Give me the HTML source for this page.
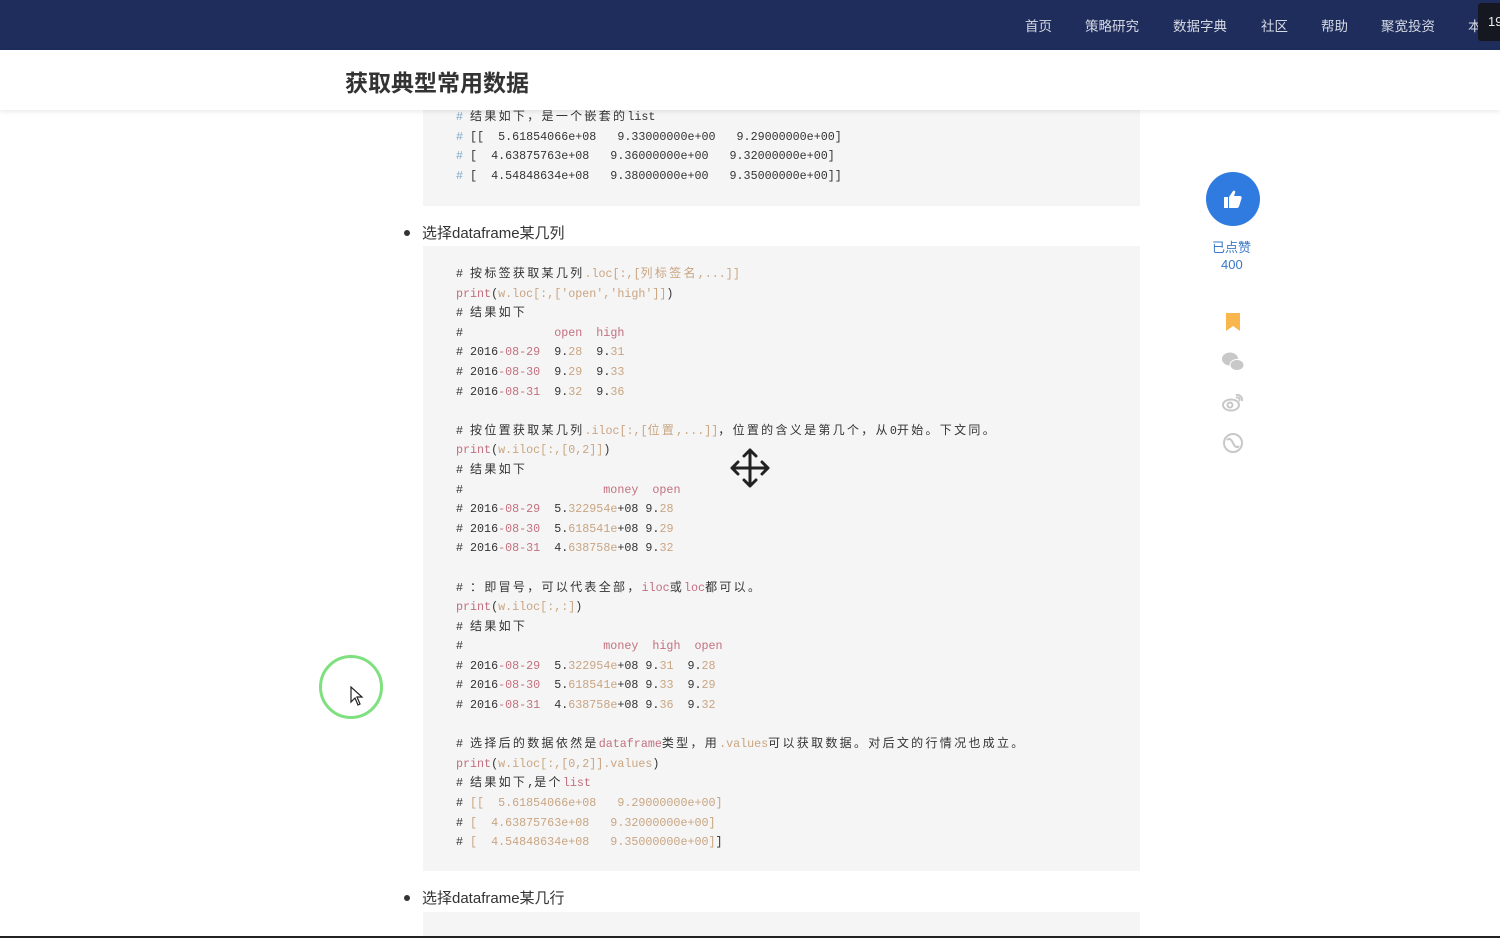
<!DOCTYPE html>
<html><head><meta charset="utf-8"><style>
*{margin:0;padding:0;box-sizing:border-box}
body{width:1500px;height:938px;overflow:hidden;background:#fff;font-family:"Liberation Sans","Noto Sans CJK SC",sans-serif;position:relative}
.hdr{position:absolute;left:0;top:0;width:1500px;height:50px;background:#1f2d5c}
.nav{position:absolute;top:15px;color:#d5d9e4;font-size:13.5px;font-family:"Noto Sans CJK SC",sans-serif}
.tip{position:absolute;left:1478px;top:3px;width:30px;height:38px;background:#151820;border-radius:3px;color:#eee;font-size:13px;padding:11px 0 0 10px}
.tbar{position:absolute;left:0;top:50px;width:1500px;height:60px;background:#fff;box-shadow:0 2px 4px rgba(0,0,0,.08);z-index:2}
.title{position:absolute;left:345px;top:14px;font-size:23px;font-weight:bold;color:#333;font-family:"Noto Sans CJK SC",sans-serif}
.blk{position:absolute;left:423px;width:717px;background:#f5f5f5}
pre{position:absolute;left:456px;font-family:"Liberation Mono","Noto Sans CJK SC",monospace;font-size:11.7px;line-height:19.6px;color:#333}
pre div{height:19.6px;white-space:pre}
.z{font-family:"Noto Sans CJK SC",sans-serif;letter-spacing:2.3px;font-size:12px;line-height:10px}
.k{color:#c2707f}.n{color:#c9a582}.b{color:#7fa9c9}
.li{position:absolute;left:422px;font-size:15px;color:#333;font-family:"Liberation Sans","Noto Sans CJK SC",sans-serif}
.dot{position:absolute;left:404px;width:6px;height:6px;border-radius:50%;background:#333}
</style></head><body>
<div class="hdr">
<span class="nav" style="left:1025px">首页</span><span class="nav" style="left:1085px">策略研究</span><span class="nav" style="left:1173px">数据字典</span><span class="nav" style="left:1261px">社区</span><span class="nav" style="left:1321px">帮助</span><span class="nav" style="left:1381px">聚宽投资</span><span class="nav" style="left:1468px">本</span>
<div class="tip">19</div>
</div>
<div class="tbar"><div class="title">获取典型常用数据</div></div>

<div class="blk" style="top:100px;height:106px"></div>
<pre style="top:108px"><div><span class="b">#</span> <span class="z">结果如下，是一个嵌套的</span>list</div><div><span class="b">#</span> [[  5.61854066e+08   9.33000000e+00   9.29000000e+00]</div><div><span class="b">#</span> [  4.63875763e+08   9.36000000e+00   9.32000000e+00]</div><div><span class="b">#</span> [  4.54848634e+08   9.38000000e+00   9.35000000e+00]]</div></pre>

<div class="dot" style="top:230px"></div>
<div class="li" style="top:222px">选择dataframe某几列</div>
<div class="blk" style="top:246px;height:625px"></div>
<pre style="top:265px"><div># <span class="z">按标签获取某几列</span><span class="n">.loc[:,[<span class="z">列标签名</span>,...]]</span></div><div><span class="k">print</span>(<span class="n">w.loc[:,['open','high']]</span>)</div><div># <span class="z">结果如下</span></div><div>#             <span class="k">open</span>  <span class="k">high</span></div><div># 2016<span class="k">-08-29</span>  9.<span class="n">28</span>  9.<span class="n">31</span></div><div># 2016<span class="k">-08-30</span>  9.<span class="n">29</span>  9.<span class="n">33</span></div><div># 2016<span class="k">-08-31</span>  9.<span class="n">32</span>  9.<span class="n">36</span></div><div> </div><div># <span class="z">按位置获取某几列</span><span class="n">.iloc[:,[<span class="z">位置</span>,...]]</span><span class="z">，位置的含义是第几个，从</span>0<span class="z">开始。下文同。</span></div><div><span class="k">print</span>(<span class="n">w.iloc[:,[0,2]]</span>)</div><div># <span class="z">结果如下</span></div><div>#                    <span class="k">money</span>  <span class="k">open</span></div><div># 2016<span class="k">-08-29</span>  5.<span class="n">322954e</span>+08 9.<span class="n">28</span></div><div># 2016<span class="k">-08-30</span>  5.<span class="n">618541e</span>+08 9.<span class="n">29</span></div><div># 2016<span class="k">-08-31</span>  4.<span class="n">638758e</span>+08 9.<span class="n">32</span></div><div> </div><div># <span class="z">：即冒号，可以代表全部，</span><span class="k">iloc</span><span class="z">或</span><span class="k">loc</span><span class="z">都可以。</span></div><div><span class="k">print</span>(<span class="n">w.iloc[:,:]</span>)</div><div># <span class="z">结果如下</span></div><div>#                    <span class="k">money</span>  <span class="k">high</span>  <span class="k">open</span></div><div># 2016<span class="k">-08-29</span>  5.<span class="n">322954e</span>+08 9.<span class="n">31</span>  9.<span class="n">28</span></div><div># 2016<span class="k">-08-30</span>  5.<span class="n">618541e</span>+08 9.<span class="n">33</span>  9.<span class="n">29</span></div><div># 2016<span class="k">-08-31</span>  4.<span class="n">638758e</span>+08 9.<span class="n">36</span>  9.<span class="n">32</span></div><div> </div><div># <span class="z">选择后的数据依然是</span><span class="k">dataframe</span><span class="z">类型，用</span><span class="n">.values</span><span class="z">可以获取数据。对后文的行情况也成立。</span></div><div><span class="k">print</span>(<span class="n">w.iloc[:,[0,2]].values</span>)</div><div># <span class="z">结果如下</span>,<span class="z">是个</span><span class="k">list</span></div><div># <span class="n">[[  5.61854066e+08   9.29000000e+00]</span></div><div># <span class="n">[  4.63875763e+08   9.32000000e+00]</span></div><div># <span class="n">[  4.54848634e+08   9.35000000e+00]</span>]</div></pre>

<div class="dot" style="top:895px"></div>
<div class="li" style="top:887px">选择dataframe某几行</div>
<div class="blk" style="top:912px;height:26px"></div>
<div style="position:absolute;left:0;top:936px;width:1500px;height:2px;background:#222"></div>

<svg style="position:absolute;left:728px;top:446px" width="44" height="44" viewBox="0 0 44 44" fill="none" stroke="#222" stroke-width="3" stroke-linecap="round" stroke-linejoin="round"><path d="M22 4V40M4 22H40M16 10L22 4L28 10M16 34L22 40L28 34M10 16L4 22L10 28M34 16L40 22L34 28"/></svg>

<div style="position:absolute;left:319px;top:655px;width:64px;height:64px;border:3px solid #7ee07e;border-radius:50%"></div>
<svg style="position:absolute;left:350px;top:686px" width="14" height="20" viewBox="0 0 14 20"><path d="M1 1V16L5 12L8 19L10 18L7 11H12Z" fill="#fff" stroke="#222" stroke-width="1.2"/></svg>

<div style="position:absolute;left:1206px;top:172px;width:54px;height:54px;border-radius:50%;background:#2f7be0"></div>
<svg style="position:absolute;left:1222px;top:188px" width="22" height="22" viewBox="0 0 22 22"><path d="M2 9H6V20H2ZM7 9L11 3C12 2 14 3 13 5L12 8H18C19.5 8 20 9.5 19.5 10.5L17 18.5C16.5 19.5 16 20 15 20H7Z" fill="#fff"/></svg>
<div style="position:absolute;left:1212px;top:237px;font-size:13px;color:#3a78c8">已点赞</div>
<div style="position:absolute;left:1221px;top:257px;font-size:13px;color:#3a78c8">400</div>
<svg style="position:absolute;left:1225px;top:312px" width="16" height="20" viewBox="0 0 16 20"><path d="M1 1H15V19L8 14L1 19Z" fill="#f8b64c"/></svg>
<svg style="position:absolute;left:1221px;top:351px" width="24" height="22" viewBox="0 0 24 22"><ellipse cx="9" cy="8" rx="8" ry="6.5" fill="#c8c8c8"/><ellipse cx="16" cy="14" rx="7" ry="5.5" fill="#c8c8c8" stroke="#fff" stroke-width="1"/></svg>
<svg style="position:absolute;left:1221px;top:392px" width="24" height="20" viewBox="0 0 24 20" fill="none" stroke="#c8c8c8" stroke-width="2"><ellipse cx="10" cy="13" rx="8" ry="5.5"/><circle cx="9" cy="13" r="2.5"/><path d="M15 3A5 5 0 0 1 21 9M15 6A2 2 0 0 1 18 9"/></svg>
<svg style="position:absolute;left:1222px;top:432px" width="22" height="22" viewBox="0 0 22 22" fill="none" stroke="#c8c8c8" stroke-width="2"><circle cx="11" cy="11" r="9"/><path d="M5 8C8 5 10 9 11 11C12 13 14 17 17 14"/></svg>
</body></html>
